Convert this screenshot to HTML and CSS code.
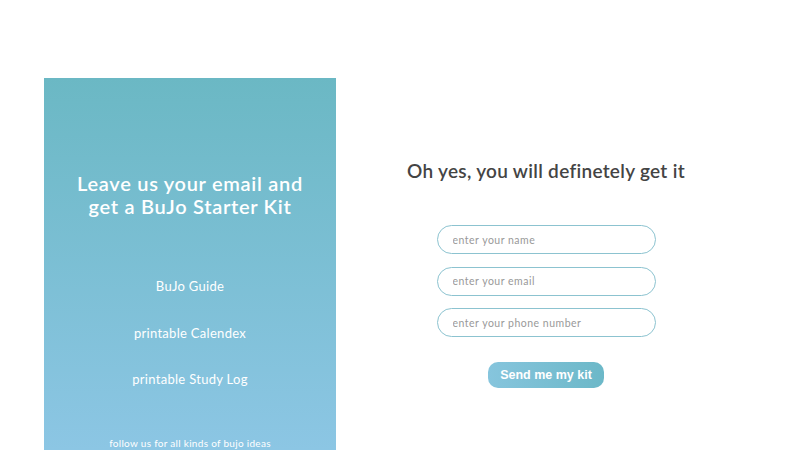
FILE: index.html
```html
<!DOCTYPE html>
<html lang="en">
<head>
<meta charset="utf-8">
<title>BuJo Starter Kit</title>
<link rel="stylesheet" href="styles.css">
</head>
<body>
<main class="page">
  <section class="promo">
    <h2 class="promo-title">Leave us your email and<br>get a BuJo Starter Kit</h2>
    <ul class="kit-list">
      <li>BuJo Guide</li>
      <li>printable Calendex</li>
      <li>printable Study Log</li>
    </ul>
    <p class="promo-foot">follow us for all kinds of bujo ideas</p>
  </section>
  <section class="signup">
    <h1 class="signup-title">Oh yes, you will definetely get it</h1>
    <form class="signup-form">
      <input class="field" type="text" placeholder="enter your name">
      <input class="field" type="email" placeholder="enter your email">
      <input class="field" type="tel" placeholder="enter your phone number">
      <button class="send" type="button">Send me my kit</button>
    </form>
  </section>
</main>
</body>
</html>
```
FILE: styles.css
```css
html, body {
  margin: 0;
  padding: 0;
  background: #fff;
  overflow: hidden;
}
body {
  font-family: Lato, "Open Sans", sans-serif;
}
.page {
  display: flex;
  align-items: flex-start;
  margin: 0 44px;
  padding-top: 78px;
  height: 372px;
  box-sizing: content-box;
}
.promo {
  width: 292px;
  flex: none;
  height: 372px;
  box-sizing: border-box;
  padding-top: 94px;
  background: linear-gradient(180deg, #6bb8c4 0%, #8cc6e4 100%);
  color: #fff;
  text-align: center;
}
.promo-title {
  margin: 0;
  font-size: 20px;
  line-height: 23px;
  font-weight: 600;
  letter-spacing: 0.7px;
}
.kit-list {
  list-style: none;
  margin: 60px 0 0;
  padding: 0;
  display: flex;
  flex-direction: column;
  gap: 30.5px;
}
.kit-list li {
  font-size: 13px;
  line-height: 16px;
  letter-spacing: 0.3px;
}
.promo-foot {
  margin: 50px 0 0;
  font-size: 10px;
  line-height: 12px;
  letter-spacing: 0.3px;
}
.signup {
  flex: 1;
  padding-top: 82px;
  display: flex;
  flex-direction: column;
  align-items: center;
}
.signup-title {
  margin: 0;
  font-size: 19px;
  line-height: 22px;
  font-weight: 600;
  color: #444;
  letter-spacing: 0.3px;
}
.signup-form {
  margin-top: 43px;
  display: flex;
  flex-direction: column;
  align-items: center;
  gap: 12.5px;
}
.field {
  width: 219px;
  height: 29px;
  box-sizing: border-box;
  border: 1px solid #8cc3d0;
  border-radius: 15px;
  padding: 0 15px;
  font-family: Lato, "Open Sans", sans-serif;
  font-size: 10.5px;
  letter-spacing: 0.5px;
  color: #555;
  outline: none;
}
.field::placeholder {
  color: #999;
}
.send {
  margin-top: 12.5px;
  width: 116px;
  height: 26px;
  border: none;
  border-radius: 10px;
  background: linear-gradient(90deg, #86c5dd 0%, #6cb8c8 100%);
  color: #fff;
  font-family: "Liberation Sans", Arial, sans-serif;
  font-weight: bold;
  font-size: 12.5px;
  padding: 0;
}
```
